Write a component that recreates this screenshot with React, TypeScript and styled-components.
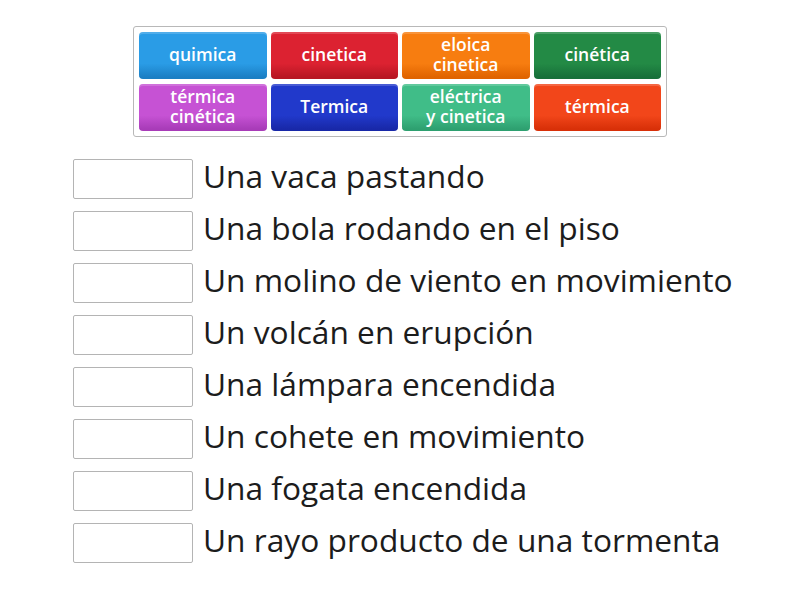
import React from "react";
import styled, { createGlobalStyle } from "styled-components";

interface Tile {
  label: string;
  color: string;
  dark: string;
}

// explicit line breaks so the wrapping matches the original tiles
const tiles: Tile[] = [
  { label: "quimica", color: "#2a9ce6", dark: "#1b7fc4" },
  { label: "cinetica", color: "#dc2231", dark: "#b81623" },
  { label: "eloica\ncinetica", color: "#f77d10", dark: "#e06400" },
  { label: "cinética", color: "#238a45", dark: "#17703a" },
  { label: "térmica\ncinética", color: "#c652d4", dark: "#a83cb8" },
  { label: "Termica", color: "#2139cb", dark: "#1828a8" },
  { label: "eléctrica\ny cinetica", color: "#40bd88", dark: "#2ea070" },
  { label: "térmica", color: "#f2461a", dark: "#d83008" },
];

const items = [
  "Una vaca pastando",
  "Una bola rodando en el piso",
  "Un molino de viento en movimiento",
  "Un volcán en erupción",
  "Una lámpara encendida",
  "Un cohete en movimiento",
  "Una fogata encendida",
  "Un rayo producto de una tormenta",
];

const GlobalStyle = createGlobalStyle`
  body {
    margin: 0;
    background: #fff;
    font-family: "Open Sans", "Liberation Sans", sans-serif;
  }
`;

const Page = styled.div`
  width: 800px;
  height: 600px;
  padding-top: 26px;
  box-sizing: border-box;
`;

const Bank = styled.div`
  width: 534px;
  margin: 0 auto;
  box-sizing: border-box;
  border: 1px solid #b8b8b8;
  border-radius: 3px;
  padding: 5px;
  display: grid;
  grid-template-columns: repeat(4, 1fr);
  gap: 5px 4px;
`;

const TileBox = styled.div<{ $color: string; $dark: string }>`
  height: 47px;
  border-radius: 4px;
  background: linear-gradient(
    to bottom,
    ${(p) => p.$color} 0%,
    ${(p) => p.$color} 70%,
    ${(p) => p.$dark} 100%
  );
  border-bottom: 2px solid ${(p) => p.$dark};
  box-sizing: border-box;
  box-shadow: inset 0 2px 0 rgba(255, 255, 255, 0.18);
  display: flex;
  align-items: center;
  justify-content: center;
  text-align: center;
  white-space: pre-line;
  color: #fff;
  font-weight: 600;
  font-size: 17.5px;
  line-height: 20px;
  padding-bottom: 1px;
`;

const List = styled.div`
  margin-top: 22px;
  padding-left: 73px;
  display: flex;
  flex-direction: column;
  gap: 12px;
`;

const Row = styled.div`
  display: flex;
  align-items: center;
  height: 40px;
`;

const Slot = styled.div`
  width: 120px;
  height: 40px;
  box-sizing: border-box;
  border: 1px solid #b4b4b4;
  border-radius: 2px;
  background: #fff;
  flex-shrink: 0;
`;

const Label = styled.div`
  margin-left: 10px;
  font-size: 31.7px;
  color: #1c1c1c;
  white-space: nowrap;
  line-height: 38px;
  padding-bottom: 7px;
`;

export default function App() {
  return (
    <Page>
      <GlobalStyle />
      <Bank>
        {tiles.map((t) => (
          <TileBox key={t.label} $color={t.color} $dark={t.dark}>
            {t.label}
          </TileBox>
        ))}
      </Bank>
      <List>
        {items.map((text) => (
          <Row key={text}>
            <Slot />
            <Label>{text}</Label>
          </Row>
        ))}
      </List>
    </Page>
  );
}
